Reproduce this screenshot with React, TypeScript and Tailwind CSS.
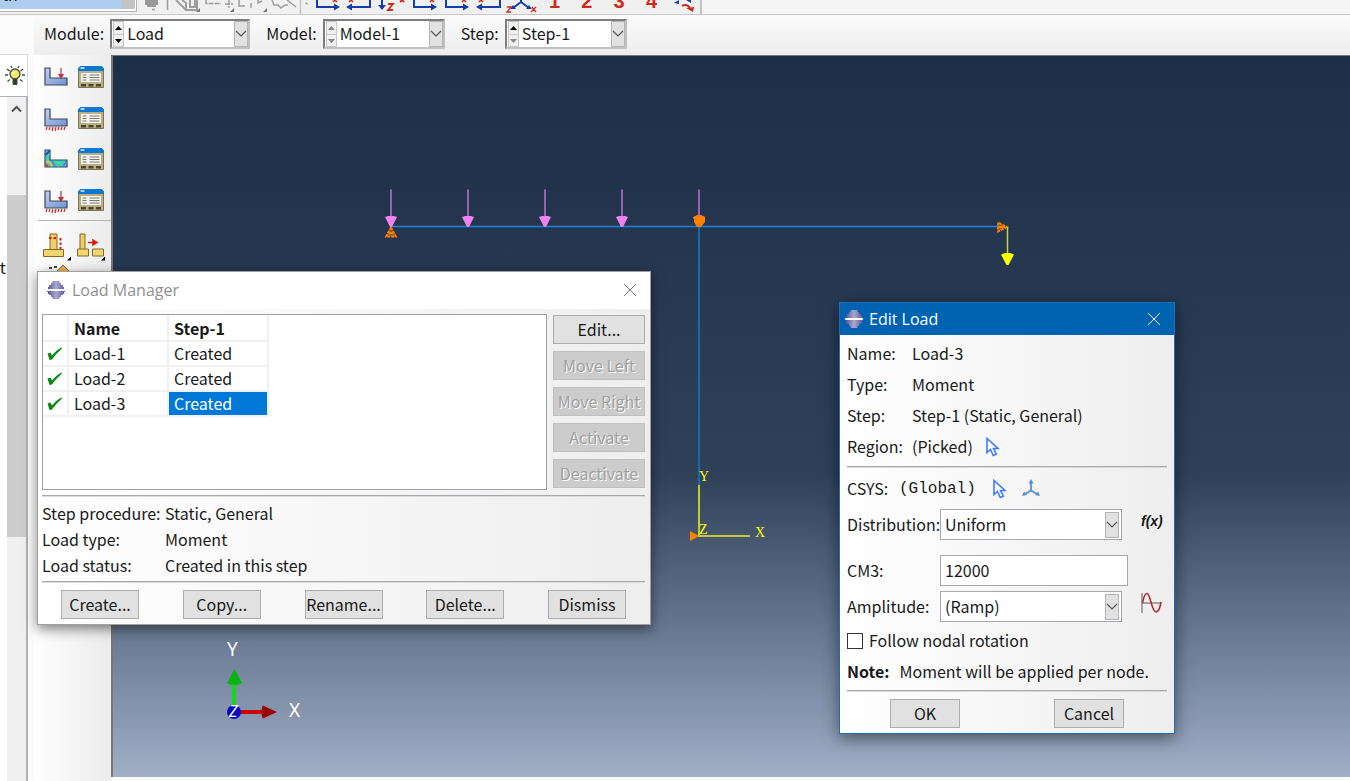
import { useState } from "react";
import type { ReactNode } from "react";

const loads = [
  { name: "Load-1", state: "Created" },
  { name: "Load-2", state: "Created" },
  { name: "Load-3", state: "Created" },
];

const sideActions = [
  { label: "Edit...", disabled: false },
  { label: "Move Left", disabled: true },
  { label: "Move Right", disabled: true },
  { label: "Activate", disabled: true },
  { label: "Deactivate", disabled: true },
];

const loadInfo = [
  ["Step procedure:", "Static, General"],
  ["Load type:", "Moment"],
  ["Load status:", "Created in this step"],
];

/* ---------- small icons ---------- */

function AppLogo() {
  return (
    <svg width="18" height="18" viewBox="0 0 18 18" className="shrink-0">
      <defs>
        <linearGradient id="logo" x1="0" x2="1">
          <stop offset="0" stopColor="#4f4d8c" />
          <stop offset="0.5" stopColor="#a9a8d0" />
          <stop offset="1" stopColor="#5a5896" />
        </linearGradient>
      </defs>
      <path d="M5.500 0h7v2H14v2h2v2h1v2h1v3h-1v2h-1v1h-2v2h-1.500v2h-7v-2H4v-2H2v-1H1v-2H0V8h1V6h1V4h2V2h1.500z" fill="url(#logo)" />
      <path d="M0 8h18v2H0z" fill="#fff" />
    </svg>
  );
}

function CloseIcon() {
  return (
    <svg width="14" height="14" viewBox="0 0 14 14" fill="none" stroke="currentColor">
      <path d="M1 1l12 12M13 1L1 13" />
    </svg>
  );
}

function CheckIcon() {
  return (
    <svg width="16" height="14" viewBox="0 0 16 14">
      <path d="M.5 6.500L3.500 5.500l1.500 3C8 5 11 2 14.500.500L15 1.500C11 5 8 8.500 5 12.500L2.500 13z" fill="#0a8a12" />
    </svg>
  );
}

function Chevron() {
  return (
    <svg width="12" height="8" viewBox="0 0 12 8" fill="none" stroke="#555" strokeWidth="1.2">
      <path d="M1 1l5 5 5-5" />
    </svg>
  );
}

function PickArrow() {
  return (
    <svg width="16" height="20" viewBox="0 0 16 20" fill="#fff" stroke="#3a7bff" strokeWidth="1.6">
      <path d="M2 1.500v14l3.500-3 2.800 6 3-1.400-2.800-5.600H13z" />
    </svg>
  );
}

function CsysIcon() {
  return (
    <svg width="18" height="19" viewBox="0 0 18 19" fill="none" stroke="#5a90c8" strokeWidth="1.8">
      <path d="M9 4v7.500L3 15M9 11.500l6 3.500" />
      <path d="M9 0l2.500 4.500h-5zM0 17l2-4.500 3 3.500zM18 17l-5-1 3-3.500z" fill="#5a90c8" stroke="none" />
    </svg>
  );
}

function AmplitudeIcon() {
  return (
    <svg width="22" height="22" viewBox="0 0 22 22" fill="none">
      <path d="M1 1v20M1 11h19.500" stroke="#8a8a8a" strokeWidth="1.500" />
      <path d="M1.500 11C3 3 4.500 1.500 6 1.500 9.500 1.500 10.500 20 15 20 17.500 20 19 16 20 10" stroke="#b5262c" strokeWidth="1.600" />
    </svg>
  );
}

function BulbIcon() {
  return (
    <svg width="20" height="22" viewBox="0 0 20 22" fill="none" stroke="#3c4d3c">
      <path d="M0 10h3M17 10h3M2 4l2.500 2M18 4l-2.500 2M2.500 16.500L5 14.500M17.500 16.500L15 14.500M6 1l1 2M14 1l-1 2" strokeWidth="1.300" />
      <circle cx="10" cy="9" r="5" fill="#f7e35c" strokeWidth="1.300" />
      <path d="M8 14h4v5.500H8z" fill="#2f3b35" />
      <circle cx="8.500" cy="8" r="1.500" fill="#fffbd0" stroke="none" />
    </svg>
  );
}

function ManagerIcon() {
  return (
    <svg width="26" height="22" viewBox="0 0 26 22">
      <path d="M.5 2.500L2.500.5h21l2 2v19H.5z" fill="#b8ae86" stroke="#7d7554" />
      <path d="M0 2.500L2.500 0h21L26 2.500V5H0z" fill="#0a78d2" />
      <path d="M2.500 2h4" stroke="#fff" strokeWidth="1.300" />
      <path d="M3 7h20v9H3z" fill="#f6f6ee" />
      <path d="M4.500 9h4M4.500 11.500h4M4.500 14h4M11.500 9h10M11.500 11.500h10M11.500 14h10" stroke="#777" />
      <path d="M3 18h5v2.500H3zM10.500 18h5v2.500h-5zM18 18h5v2.500h-5z" fill="#4c4628" />
    </svg>
  );
}

type BracketKind = "load" | "bc" | "field" | "case";

function BracketIcon({ kind }: { kind: BracketKind }) {
  return (
    <svg width="24" height="24" viewBox="0 0 24 24">
      <defs>
        <linearGradient id="steel" x1="0" x2="1" y1="0" y2="1">
          <stop offset="0" stopColor="#c3d3f0" />
          <stop offset="1" stopColor="#6f92cf" />
        </linearGradient>
      </defs>
      <path
        d="M1 1h5v10h17v7H1z"
        fill={kind === "field" ? "#49c9d8" : "url(#steel)"}
        stroke="#3d4558"
        strokeWidth="1.200"
      />
      {kind === "field" && (
        <g fill="none" strokeWidth="1.800">
          <path d="M2 6l3.500-4.500" stroke="#2b2fe8" />
          <path d="M1.800 9.500L5.500 5" stroke="#3be06a" />
          <path d="M2 13c3-1 5 1 6 4.500" stroke="#e8c040" />
          <path d="M1.800 15.500l2.500 2" stroke="#ee3322" />
          <path d="M10 12l4.500 5 4.500-5" stroke="#2fe07a" />
          <path d="M7.500 12l4 5.500M22 12.500l-3 5" stroke="#5a7de0" />
        </g>
      )}
      {(kind === "load" || kind === "case") && (
        <path d="M17 1v7M15 7.500h4L17 11z" stroke="#b8323a" fill="#b8323a" strokeWidth="1.200" />
      )}
      {(kind === "bc" || kind === "case") && (
        <path d="M3 19l-1 3M6 19l-1 3M9 19l-1 4M12 19l-1 4M15 19l-1 3M18 19l-1 3M21 19l-1 3" stroke="#c9302c" strokeWidth="1.300" />
      )}
    </svg>
  );
}

function PartitionIcon({ split }: { split?: boolean }) {
  return (
    <svg width="30" height="28" viewBox="0 0 30 28">
      {split ? (
        <>
          <path d="M4 1h5v16H4z" fill="#f0cf62" stroke="#7d6a2c" />
          <path d="M1.500 16h11v7h-11zM16.500 16h11v7h-11z" fill="#f3d56d" stroke="#7d6a2c" />
          <path d="M12 9.500h5M17 7v5l4-2.500z" stroke="#d3200e" fill="#d3200e" strokeWidth="1.500" />
        </>
      ) : (
        <>
          <path d="M8 1h7v16H8z" fill="#f0cf62" stroke="#7d6a2c" />
          <path d="M1.500 16.500h20v7h-20z" fill="#f3d56d" stroke="#7d6a2c" />
          <path d="M7 5h9M18.500 5v12" stroke="#d3200e" strokeWidth="2" strokeDasharray="2.500 2" />
        </>
      )}
      <path d="M29 23.500v4h-4z" fill="#000" />
    </svg>
  );
}

/* ---------- toolbar cut by the top edge ---------- */

const viewIcons: { id: string; drawing: ReactNode }[] = [
  { id: "xy", drawing: <ArrowRight /> },
  { id: "yx", drawing: <ArrowLeft /> },
  {
    id: "xz",
    drawing: (
      <>
        <path d="M5 0v6" stroke="#123fa8" strokeWidth="2" />
        <path d="M1 5h8l-4 5z" fill="#123fa8" />
        <path d="M11 4h5l-5 6h5M23 2l2-2 2 2" stroke="#cf2a1a" strokeWidth="1.800" fill="none" />
      </>
    ),
  },
  { id: "zx", drawing: <ArrowRight /> },
  { id: "yz", drawing: <ArrowRight /> },
  { id: "zy", drawing: <ArrowLeft /> },
  {
    id: "iso",
    drawing: (
      <>
        <path d="M15 0v2L7 8M15 2l8 6" stroke="#123fa8" strokeWidth="2" fill="none" />
        <path d="M4 9h6L7 5zM20 9h6l-3-4z" fill="#123fa8" />
        <path d="M1 7h4l-4 5h4M26 7l4 5M30 7l-5 5" stroke="#cf2a1a" strokeWidth="1.300" fill="none" />
      </>
    ),
  },
];

function ArrowRight() {
  return (
    <>
      <path d="M5 0v7h17" stroke="#123fa8" strokeWidth="2" fill="none" />
      <path d="M22 3.500l6 3.500-6 3.500z" fill="#123fa8" />
      <path d="M21 2l2-2 2 2" stroke="#cf2a1a" strokeWidth="1.500" fill="none" />
    </>
  );
}

function ArrowLeft() {
  return (
    <>
      <path d="M26 0v7H8" stroke="#123fa8" strokeWidth="2" fill="none" />
      <path d="M8 3.500L2 7l6 3.500z" fill="#123fa8" />
      <path d="M5 2l2-2 2 2" stroke="#cf2a1a" strokeWidth="1.500" fill="none" />
    </>
  );
}

function TopToolbar() {
  return (
    <header className="flex h-[15px] shrink-0 overflow-hidden border-b border-[#c8c8c8] bg-[#f5f5f5]">
      <div className="flex h-[14px] w-[702px] items-start border-r-2 border-[#c4c4c4] bg-[#f0f0f0]">
        <div className="flex h-3 w-[137px] border-r border-b border-[#b4b4b4] bg-white pr-px">
          <div className="h-[9px] flex-1 overflow-hidden bg-[#aecdee] pl-0.5">
            <span className="-mt-4 block leading-5">th</span>
          </div>
          <div className="h-[9px] w-[13px] bg-[#c3c3c3]" />
        </div>
        <svg width="175" height="14" viewBox="137 0 175 14" fill="none" stroke="#9d9d9d" strokeWidth="1.500">
          <path d="M145 0h13v5h-2v2h-9V5h-2z" fill="#999" stroke="none" />
          <path d="M152 9.500h3M167.500 0v10" />
          <path d="M176 0l10 10h11V0M186 10V3l-4-3M190 0v7h5V0" strokeWidth="2" />
          <path d="M206 0v3.500h15M229 0v8M225 4h8" strokeDasharray="5 1" />
          <path d="M239 0v6h6M251 3v5M258 0v3l4-2" />
          <path d="M272 0l2 5h4l3 3 4-3h3M287 0l9 7" />
          <path d="M200 8v4h-4zM234 8v4h-4zM267 8v4h-4z" fill="#777" stroke="none" />
          <path d="M300.500 0v14" stroke="#c4c4c4" />
          <path d="M305.500 3.500h2" strokeWidth="2" />
        </svg>
        <div className="flex flex-1">
          {viewIcons.map((v) => (
            <button key={v.id} type="button" aria-label={v.id} className="h-[14px] flex-1">
              <svg width="31" height="14" viewBox="0 0 31 14">{v.drawing}</svg>
            </button>
          ))}
          {[1, 2, 3, 4].map((n) => (
            <button key={n} type="button" className="h-[14px] flex-1 font-['Liberation_Sans'] text-xl font-bold text-[#cf2a1a]">
              <span className="-mt-3 block leading-5">{n}</span>
            </button>
          ))}
          <button type="button" aria-label="rotate" className="h-[14px] flex-1">
            <svg width="31" height="14" viewBox="0 0 31 14" fill="none">
              <path d="M6 3l5-3v4zM18 0h5v3z" fill="#123fa8" />
              <path d="M14 6c3-2 7-1 8 3" stroke="#cf2a1a" strokeWidth="2" />
              <path d="M18 8l8-1-1 5z" fill="#cf2a1a" />
            </svg>
          </button>
        </div>
      </div>
    </header>
  );
}

/* ---------- context bar ---------- */

interface SpinSelectProps {
  id: string;
  label: string;
  value: string;
  width: string;
  canUp: boolean;
  canDown: boolean;
}

function SpinSelect({ id, label, value, width, canUp, canDown }: SpinSelectProps) {
  return (
    <div className="flex items-center gap-1.5">
      <label htmlFor={id} className="pb-0.5">{label}</label>
      <div className={`flex h-[30px] items-center border-2 border-[#c0c0c0] border-t-[#7e7e7e] border-l-[#7e7e7e] bg-white pl-px ${width}`}>
        <div className="flex w-[11px] shrink-0 flex-col border border-[#c8c8c8] bg-[#f0f0f0]">
          <button type="button" aria-label={`Previous ${label}`} disabled={!canUp} className="flex h-3 items-center justify-center text-black disabled:text-[#888]">
            <svg width="7" height="4" viewBox="0 0 7 4" fill="currentColor"><path d="M3.500 0L7 4H0z" /></svg>
          </button>
          <button type="button" aria-label={`Next ${label}`} disabled={!canDown} className="flex h-3 items-center justify-center border-t border-[#c8c8c8] text-black disabled:text-[#888]">
            <svg width="7" height="4" viewBox="0 0 7 4" fill="currentColor"><path d="M3.500 4L7 0H0z" /></svg>
          </button>
        </div>
        <select id={id} className="min-w-0 flex-1 appearance-none bg-transparent pb-0.5 pl-[3px] leading-6 outline-none">
          <option>{value}</option>
        </select>
        <span className="pointer-events-none flex h-[26px] w-[14px] shrink-0 items-center justify-center border border-[#b4b4b4] bg-[#e1e1e1]">
          <Chevron />
        </span>
      </div>
    </div>
  );
}

function ContextBar() {
  return (
    <div className="flex h-10 shrink-0 items-center gap-4 bg-linear-to-b from-[#fbfbfb] to-[#ededed] pb-0.5 pl-2.5">
      <SpinSelect id="module" label="Module:" value="Load" width="w-[140px]" canUp canDown />
      <SpinSelect id="model" label="Model:" value="Model-1" width="w-[122px]" canUp={false} canDown={false} />
      <SpinSelect id="step" label="Step:" value="Step-1" width="w-[122px]" canUp canDown={false} />
    </div>
  );
}

/* ---------- left side ---------- */

function TreePane() {
  return (
    <aside className="flex w-7 shrink-0 flex-col bg-[#fbfbfb] pt-[39px]">
      <div className="flex h-[42px] items-center justify-end border-t border-r border-[#d8d8d8] bg-white pr-0.5">
        <BulbIcon />
      </div>
      <div className="flex flex-1 border-t border-r-2 border-[#b0b0b6] bg-white">
        <div className="w-[7px] overflow-hidden pt-[158px]">
          <span className="-ml-2.5 block leading-6">nt</span>
        </div>
        <div className="flex flex-1 flex-col bg-[#f0f0f0]">
          <div className="flex h-[98px] justify-center pt-2">
            <svg width="11" height="8" viewBox="0 0 11 8" fill="none" stroke="#505050" strokeWidth="2">
              <path d="M1 6.500l4.500-4.500L10 6.500" />
            </svg>
          </div>
          <div className="h-[342px] bg-[#cdcdcd]" />
        </div>
      </div>
    </aside>
  );
}

const tools: { id: string; kind: BracketKind }[] = [
  { id: "Load", kind: "load" },
  { id: "Boundary Condition", kind: "bc" },
  { id: "Predefined Field", kind: "field" },
  { id: "Load Case", kind: "case" },
];

function Toolbox() {
  return (
    <nav className="w-[77px] shrink-0 bg-linear-to-r from-white to-[#ececec] pt-2.5">
      <div className="flex flex-col gap-[17px]">
        {tools.map((t) => (
          <div key={t.id} className="flex h-6 items-start gap-2.5 pl-2.5">
            <button type="button" aria-label={`Create ${t.id}`} className="pt-0.5">
              <BracketIcon kind={t.kind} />
            </button>
            <button type="button" aria-label={`${t.id} Manager`} className="pt-px">
              <ManagerIcon />
            </button>
          </div>
        ))}
      </div>
      <div className="mt-2 ml-1 h-px bg-[#b4b4b4]" />
      <div className="mt-3 flex gap-1 pl-2">
        <button type="button" aria-label="Partition Edge"><PartitionIcon /></button>
        <button type="button" aria-label="Partition Face"><PartitionIcon split /></button>
      </div>
      <svg width="24" height="16" viewBox="0 0 24 16" className="mt-1 ml-3.5">
        <path d="M1 3h3M6 2h3" stroke="#444" strokeWidth="2" />
        <path d="M9 6l6-6 6 6v10H9z" fill="#ecb04e" stroke="#8a6a2c" />
      </svg>
    </nav>
  );
}

/* ---------- viewport ---------- */

function Viewport() {
  return (
    <div className="mb-1 flex-1 overflow-hidden border-t border-l-2 border-[#777] bg-linear-to-b from-[#1d2e47] from-0% via-[#2f4159] via-58% to-[#a1afc7] to-100%">
      <svg className="h-full w-full">
        <g transform="translate(-113 -56)">
          {/* frame */}
          <path d="M391 226.500h612" stroke="#1f7fe0" strokeWidth="1.500" />
          <path d="M699 227v258" stroke="#1d66b0" strokeWidth="2" />

          {/* line load */}
          {[391, 468, 545, 622, 699].map((x) => (
            <g key={x}>
              <path d={`M${x} 189.500v28`} stroke="#a968b8" strokeWidth="1.800" />
              <path d={`M${x - 6} 217l3-1h6l3 1-5 10h-2z`} fill="#ee82ee" />
            </g>
          ))}
          <path d="M694 217l3-2h4l4 2v5l-4 5h-4l-3-5z" fill="#ff7f00" />

          {/* supports */}
          <g fill="#8f5a26" stroke="#ff7f00" strokeWidth="1.800" strokeDasharray="3 1">
            <path d="M391 227.500l5 9h-10z" />
            <path d="M1007 227l-9 4.500v-9z" />
          </g>
          <path d="M389 233h4M999 227h6" stroke="#ff7f00" strokeWidth="2" />
          <path d="M690 531l9 5-9 5z" fill="#ff7f00" />

          {/* concentrated force */}
          <path d="M1007.500 227v27" stroke="#c9d13c" strokeWidth="1.500" />
          <path d="M1001 254.500l4-1.500h5l4 1.500-5.500 10.500h-2z" fill="#ffff00" />

          {/* datum axes */}
          <path d="M699 485v51h51" fill="none" stroke="#c3cc2c" strokeWidth="2" />
          <g fill="#ffff00" fontFamily="Liberation Serif, serif" fontSize="14">
            <text x="699" y="481">Y</text>
            <text x="755" y="537">X</text>
            <text x="699" y="534">Z</text>
          </g>

          {/* view triad */}
          <path d="M234 684v22" stroke="#12d81c" strokeWidth="4" />
          <path d="M234.500 669l7.500 14c-3 2.500-12 2.500-15 0z" fill="#08b510" />
          <path d="M240 712h24" stroke="#c80404" strokeWidth="4" />
          <path d="M277 712l-14 6.500c-2-3-2-10 0-13z" fill="#9d0505" />
          <circle cx="234" cy="712" r="7" fill="#0606c8" />
          <g fill="#fff" fontFamily="Noto Sans, sans-serif">
            <text x="227" y="656" fontSize="19">Y</text>
            <text x="289" y="717" fontSize="19">X</text>
            <text x="229" y="717" fontSize="16" fontStyle="italic">Z</text>
          </g>
        </g>
      </svg>
    </div>
  );
}

/* ---------- dialogs ---------- */

function PushButton({ children, className, disabled }: { children: ReactNode; className: string; disabled?: boolean }) {
  return (
    <button
      type="button"
      disabled={disabled}
      className={`flex h-[29px] items-center justify-center border border-[#adadad] bg-[#e1e1e1] pb-0.5 whitespace-nowrap disabled:border-[#bfbfbf] disabled:bg-[#cccccc] disabled:text-[#a0a0a0] disabled:[text-shadow:1px_1px_0_#fff] ${className}`}
    >
      {children}
    </button>
  );
}

function Rule() {
  return <div className="h-0.5 border-t border-b border-t-[#a8a8a8] border-b-[#dcdcdc]" />;
}

function LoadManager() {
  const [selected, setSelected] = useState("Load-3");

  return (
    <section className="absolute top-[271px] left-[37px] w-[614px] bg-linear-to-r from-white to-[#eeeeee] shadow-[0_4px_12px_rgba(0,0,0,0.5)] outline -outline-offset-1 outline-[#a0a0a0]">
      <div className="flex h-[38px] items-center bg-white pl-2.5">
        <AppLogo />
        <h2 className="flex-1 pl-[7px] font-['Open_Sans',sans-serif] text-[#8f8f8f]">Load Manager</h2>
        <button type="button" aria-label="Close Load Manager" className="pr-[14px] text-[#808080]">
          <CloseIcon />
        </button>
      </div>

      <div className="pt-[5px] pr-1.5 pb-1.5 pl-[5px]">
        <div className="flex gap-1.5 pb-[5px]">
          <div className="h-[176px] flex-1 border border-[#a0a0a8] bg-white">
            <table className="table-fixed border-collapse text-left">
              <thead>
                <tr className="h-[26px]">
                  <th aria-label="Status" className="w-[25px] border-r-2 border-b-2 border-[#f0f0f0] p-0" />
                  <th className="w-[100px] border-r-2 border-b-2 border-[#f0f0f0] p-0 pl-[5px] leading-6">Name</th>
                  <th className="w-[100px] border-r-2 border-b-2 border-[#f0f0f0] p-0 pl-[5px] leading-6">Step-1</th>
                </tr>
              </thead>
              <tbody>
                {loads.map((l) => (
                  <tr key={l.name} className="h-[25px]" onClick={() => setSelected(l.name)}>
                    <td className="border-r-2 border-b-2 border-[#f0f0f0] p-0 pl-1"><CheckIcon /></td>
                    <td className="border-r-2 border-b-2 border-[#f0f0f0] p-0 pl-[5px] leading-[23px]">{l.name}</td>
                    <td
                      className={`border-r-2 border-b-2 border-[#f0f0f0] p-0 pl-[5px] leading-[23px] ${
                        selected === l.name ? "bg-[#0078d7] text-white" : ""
                      }`}
                    >
                      {l.state}
                    </td>
                  </tr>
                ))}
              </tbody>
            </table>
          </div>
          <div className="flex w-[92px] flex-col gap-[7px] pt-px">
            {sideActions.map((a) => (
              <PushButton key={a.label} disabled={a.disabled} className="w-full">{a.label}</PushButton>
            ))}
          </div>
        </div>

        <Rule />
        <dl className="grid grid-cols-[123px_1fr] gap-y-0.5 pt-1 pb-1 leading-6">
          {loadInfo.map(([k, v]) => (
            <div key={k} className="contents">
              <dt className="whitespace-nowrap">{k}</dt>
              <dd>{v}</dd>
            </div>
          ))}
        </dl>
        <Rule />

        <div className="flex justify-between px-[19px] pt-[7px]">
          {["Create...", "Copy...", "Rename...", "Delete...", "Dismiss"].map((b) => (
            <PushButton key={b} className="w-[78px]">{b}</PushButton>
          ))}
        </div>
      </div>
    </section>
  );
}

function ComboBox({ id, value }: { id: string; value: string }) {
  return (
    <div className="flex h-[31px] w-[182px] items-center border border-[#a6a6ae] bg-white pr-0.5">
      <select id={id} className="min-w-0 flex-1 appearance-none bg-transparent pb-0.5 pl-1 leading-6 outline-none">
        <option>{value}</option>
      </select>
      <span className="pointer-events-none flex h-[26px] w-[14px] items-center justify-center border border-[#b4b4b4] bg-[#e1e1e1]">
        <Chevron />
      </span>
    </div>
  );
}

function EditLoad() {
  return (
    <section className="absolute top-[302px] left-[839px] w-[336px] bg-linear-to-r from-white to-[#eeeeee] shadow-[0_4px_16px_rgba(0,0,0,0.5)] outline -outline-offset-1 outline-[#1a6fb8]">
      <div className="flex h-[33px] items-center bg-[#0063b1] pl-1.5 text-white">
        <AppLogo />
        <h2 className="flex-1 pl-1.5 font-['Open_Sans',sans-serif]">Edit Load</h2>
        <button type="button" aria-label="Close Edit Load" className="pr-[14px]">
          <CloseIcon />
        </button>
      </div>

      <form className="px-2 pt-[3px] pb-1.5" onSubmit={(e) => e.preventDefault()}>
        <dl className="grid grid-cols-[65px_1fr] pb-1 leading-[31px]">
          <dt>Name:</dt>
          <dd>Load-3</dd>
          <dt>Type:</dt>
          <dd>Moment</dd>
          <dt>Step:</dt>
          <dd>Step-1 (Static, General)</dd>
          <dt>Region:</dt>
          <dd className="flex items-center gap-3">
            (Picked)
            <button type="button" aria-label="Pick region"><PickArrow /></button>
          </dd>
        </dl>
        <Rule />

        <div className="flex h-[41px] items-center">
          <span className="w-[52px] pb-0.5">CSYS:</span>
          <span className="font-['Liberation_Mono',monospace]">(Global)</span>
          <button type="button" aria-label="Pick CSYS" className="pl-4"><PickArrow /></button>
          <button type="button" aria-label="Create CSYS" className="pl-3.5"><CsysIcon /></button>
        </div>

        <div className="flex items-center">
          <label htmlFor="distribution" className="w-[93px] pb-0.5">Distribution:</label>
          <ComboBox id="distribution" value="Uniform" />
          <button type="button" className="mb-2 pl-[19px] font-['Liberation_Sans',sans-serif] text-sm font-bold italic">f(x)</button>
        </div>

        <div className="flex items-center pt-[15px] pb-[5px]">
          <label htmlFor="cm3" className="w-[93px] pb-0.5">CM3:</label>
          <input id="cm3" defaultValue="12000" className="h-[31px] w-[188px] border border-[#a6a6ae] bg-white pb-0.5 pl-1 outline-none" />
        </div>

        <div className="flex items-center">
          <label htmlFor="amplitude" className="w-[93px] pb-0.5">Amplitude:</label>
          <ComboBox id="amplitude" value="(Ramp)" />
          <button type="button" aria-label="Create amplitude" className="mb-2 pl-[19px]"><AmplitudeIcon /></button>
        </div>

        <label className="flex h-[38px] items-center gap-1.5">
          <input type="checkbox" className="size-4 appearance-none border border-[#333] bg-white checked:bg-[#0078d7]" />
          <span className="pb-0.5">Follow nodal rotation</span>
        </label>
        <p className="pb-2 leading-[22px]">
          <b className="pr-2.5">Note:</b>Moment will be applied per node.
        </p>
        <Rule />

        <div className="flex justify-between px-[43px] pt-[7px]">
          <PushButton className="w-[70px]">OK</PushButton>
          <PushButton className="w-[70px]">Cancel</PushButton>
        </div>
      </form>
    </section>
  );
}

export default function App() {
  return (
    <div className="relative flex h-screen flex-col overflow-hidden bg-[#fbfbfb] font-['Noto_Sans_CJK_SC',sans-serif] text-base text-[#1a1a1a]">
      <TopToolbar />
      <div className="flex min-h-0 flex-1">
        <TreePane />
        <main className="flex min-w-0 flex-1 flex-col pl-1.5">
          <ContextBar />
          <div className="flex min-h-0 flex-1">
            <Toolbox />
            <Viewport />
          </div>
        </main>
      </div>
      <LoadManager />
      <EditLoad />
    </div>
  );
}
